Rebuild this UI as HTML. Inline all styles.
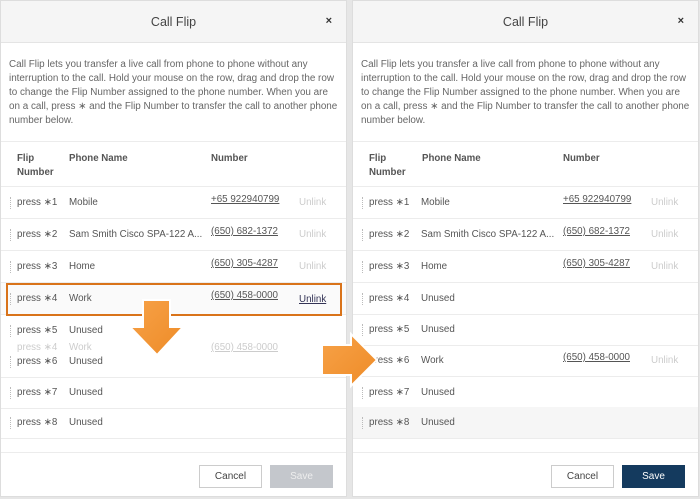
<!DOCTYPE html><html><head><style>
*{margin:0;padding:0;box-sizing:border-box}
body{width:700px;height:499px;background:#e6e6e6;font-family:"Liberation Sans",Arial,sans-serif;font-size:10px;color:#555;position:relative;overflow:hidden}
.p{position:absolute;top:0;width:347px;height:497px;background:#fff;border:1px solid #ddd}
.hd{height:42px;background:#f5f5f5;border-bottom:1px solid #e4e4e4;text-align:center;line-height:42px;font-size:12.5px;color:#444}
.x{position:absolute;right:14px;top:0;line-height:40px;font-size:11px;color:#333;font-weight:bold}
.desc{position:absolute;left:8px;top:57px;width:332px;line-height:14px;color:#666;font-size:9.9px}
.sep{position:absolute;left:0;right:0;height:1px;background:#ececec}
.th{position:absolute;top:151px;font-weight:bold;color:#555;line-height:14px;font-size:9.7px}
.row{position:absolute;left:0;right:0;height:32px;border-bottom:1px solid #ececec}
.row span{position:absolute;top:10px;font-size:9.8px}
.h{left:9px;width:1px;height:12px;top:10px!important;border-left:1px dotted #bbb}
.pr{left:16px;color:#555}.nm{left:68px;color:#555}.nu{left:210px;color:#555;text-decoration:underline;top:7px!important}.ul{left:298px;color:#ccc}
.btn{position:absolute;top:464px;height:23px;width:63px;text-align:center;line-height:23px;font-size:10px}
.c{border:1px solid #ccc;color:#444;background:#fff;line-height:21px}
</style></head><body>

<div class="p" style="left:0">
<div class="hd">Call Flip<span class="x">×</span></div>
<div class="desc">Call Flip lets you transfer a live call from phone to phone without any interruption to the call. Hold your mouse on the row, drag and drop the row to change the Flip Number assigned to the phone number. When you are on a call, press ∗ and the Flip Number to transfer the call to another phone number below.</div>
<div class="sep" style="top:140px"></div>
<div class="th" style="left:16px">Flip<br>Number</div><div class="th" style="left:68px">Phone Name</div><div class="th" style="left:210px">Number</div>
<div class="sep" style="top:185px"></div>
<div class="row" style="top:186px"><span class="h"></span><span class="pr">press ∗1</span><span class="nm">Mobile</span><span class="nu">+65 922940799</span><span class="ul">Unlink</span></div>
<div class="row" style="top:218px"><span class="h"></span><span class="pr">press ∗2</span><span class="nm">Sam Smith Cisco SPA-122 A...</span><span class="nu">(650) 682-1372</span><span class="ul">Unlink</span></div>
<div class="row" style="top:250px"><span class="h"></span><span class="pr">press ∗3</span><span class="nm">Home</span><span class="nu">(650) 305-4287</span><span class="ul">Unlink</span></div>
<div class="row" style="top:282px;background:#fafafa"><span class="h"></span><span class="pr">press ∗4</span><span class="nm">Work</span><span class="nu">(650) 458-0000</span><span class="ul" style="color:#335;text-decoration:underline;top:11px">Unlink</span></div>
<div class="row" style="top:314px;border:none"><span class="h"></span><span class="pr">press ∗5</span><span class="nm">Unused</span></div>
<div style="position:absolute;top:341px;left:0;right:0;color:#ccc;font-size:9.8px"><span style="position:absolute;left:16px">press ∗4</span><span style="position:absolute;left:68px">Work</span><span style="position:absolute;left:210px;text-decoration:underline">(650) 458-0000</span></div>
<div class="row" style="top:345px"><span class="h"></span><span class="pr">press ∗6</span><span class="nm">Unused</span></div>
<div class="row" style="top:376px"><span class="h"></span><span class="pr">press ∗7</span><span class="nm">Unused</span></div>
<div class="row" style="top:406px"><span class="h"></span><span class="pr">press ∗8</span><span class="nm">Unused</span></div>
<div class="sep" style="top:451px"></div>
<div class="btn c" style="left:198px">Cancel</div>
<div class="btn" style="left:269px;background:#c4c7cc;color:#eee">Save</div>
<div style="position:absolute;left:5px;top:282px;width:336px;height:33px;border:2px solid #d9731a"></div>
</div>

<div class="p" style="left:352px">
<div class="hd">Call Flip<span class="x">×</span></div>
<div class="desc">Call Flip lets you transfer a live call from phone to phone without any interruption to the call. Hold your mouse on the row, drag and drop the row to change the Flip Number assigned to the phone number. When you are on a call, press ∗ and the Flip Number to transfer the call to another phone number below.</div>
<div class="sep" style="top:140px"></div>
<div class="th" style="left:16px">Flip<br>Number</div><div class="th" style="left:69px">Phone Name</div><div class="th" style="left:210px">Number</div>
<div class="sep" style="top:185px"></div>
<div class="row" style="top:186px"><span class="h"></span><span class="pr">press ∗1</span><span class="nm">Mobile</span><span class="nu">+65 922940799</span><span class="ul">Unlink</span></div>
<div class="row" style="top:218px"><span class="h"></span><span class="pr">press ∗2</span><span class="nm">Sam Smith Cisco SPA-122 A...</span><span class="nu">(650) 682-1372</span><span class="ul">Unlink</span></div>
<div class="row" style="top:250px"><span class="h"></span><span class="pr">press ∗3</span><span class="nm">Home</span><span class="nu">(650) 305-4287</span><span class="ul">Unlink</span></div>
<div class="row" style="top:282px"><span class="h"></span><span class="pr">press ∗4</span><span class="nm">Unused</span></div>
<div class="row" style="top:313px"><span class="h"></span><span class="pr">press ∗5</span><span class="nm">Unused</span></div>
<div class="row" style="top:344px"><span class="h"></span><span class="pr">press ∗6</span><span class="nm">Work</span><span class="nu">(650) 458-0000</span><span class="ul">Unlink</span></div>
<div class="row" style="top:376px"><span class="h"></span><span class="pr">press ∗7</span><span class="nm">Unused</span></div>
<div class="row" style="top:406px;background:#f6f6f6"><span class="h"></span><span class="pr">press ∗8</span><span class="nm">Unused</span></div>
<div class="sep" style="top:451px"></div>
<div class="btn c" style="left:198px">Cancel</div>
<div class="btn" style="left:269px;background:#143a5e;color:#fff">Save</div>
</div>

<svg width="700" height="499" style="position:absolute;left:0;top:0">
<defs><linearGradient id="g" x1="0" y1="0" x2="1" y2="1"><stop offset="0" stop-color="#f7a248"/><stop offset="1" stop-color="#ee8b27"/></linearGradient></defs>
<path d="M143 300H170V327H183L157 355L130 327H143Z" fill="url(#g)" stroke="#fff" stroke-width="2"/>
<path d="M322 345H351V334L377 360L351 386V375H322Z" fill="url(#g)" stroke="#fff" stroke-width="2"/>
</svg>
</body></html>
